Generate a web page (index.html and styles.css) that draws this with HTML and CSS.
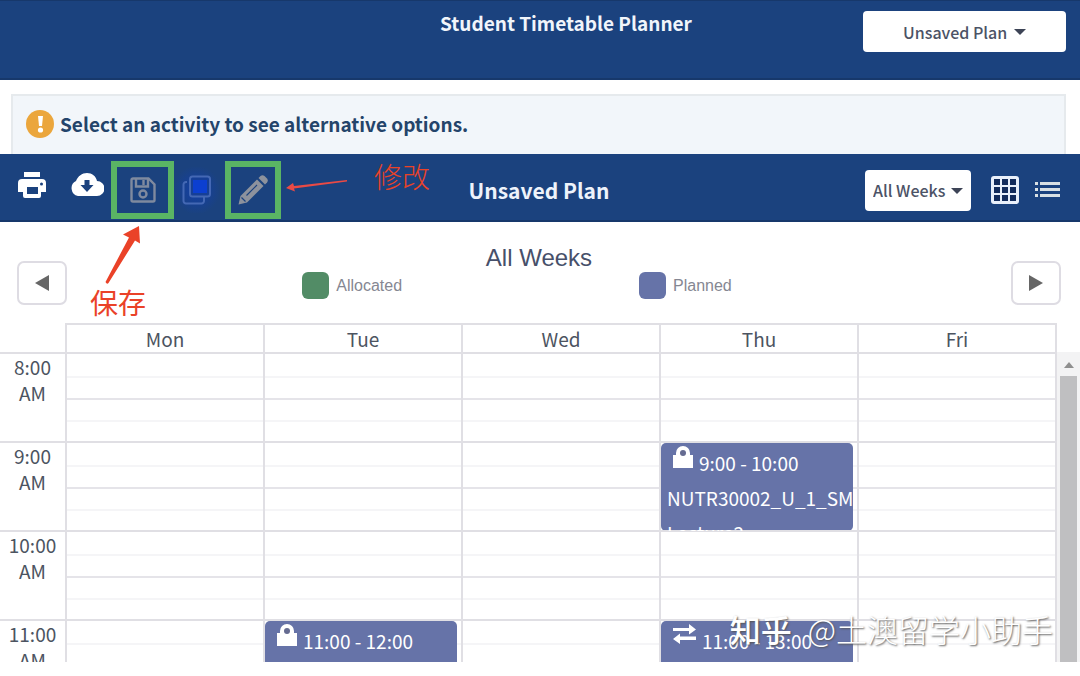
FILE: index.html
```html
<!DOCTYPE html>
<html lang="en">
<head>
<meta charset="utf-8">
<title>Student Timetable Planner</title>
<link rel="stylesheet" href="styles.css">
</head>
<body>

<header class="page-header">
  <h1>Student Timetable Planner</h1>
  <div class="dropdown dropdown-plan">
    <select aria-label="Plan">
      <option>Unsaved Plan</option>
    </select>
  </div>
</header>

<div class="notice">
  <svg width="28" height="28" viewBox="0 0 28 28" aria-hidden="true">
    <circle cx="14" cy="14" r="14" fill="#eba63c"/>
    <path d="M12 6h5l-1 10h-3z" fill="#fff"/>
    <circle cx="14.500" cy="20" r="2.600" fill="#fff"/>
  </svg>
  <p>Select an activity to see alternative options.</p>
</div>

<div class="toolbar">
  <div class="tools">
    <button class="tool tool-print" aria-label="Print">
      <svg width="28" height="26" viewBox="0 0 28 26">
        <path d="M6 0h16v5H6z" fill="#fff"/>
        <path d="M4 7h20a4 4 0 0 1 4 4v9h-5v4a2 2 0 0 1-2 2H7a2 2 0 0 1-2-2v-4H0v-9a4 4 0 0 1 4-4z" fill="#fff"/>
        <path d="M9 15h11v7H9z" fill="#1b427e"/>
        <circle cx="23.500" cy="12" r="1.500" fill="#1b427e"/>
      </svg>
    </button>
    <button class="tool tool-download" aria-label="Download">
      <svg width="34" height="24" viewBox="0 0 34 24">
        <path d="M8 23a8 8 0 0 1-2-15C8 3 12 0 17 0c5 0 9 3 10 8a7.500 7.500 0 0 1 0 15z" fill="#fff"/>
        <path d="M14.500 7h5v5h4L17 19l-6.500-7h4z" fill="#1b427e"/>
      </svg>
    </button>
    <button class="tool tool-save framed" aria-label="Save">
      <svg width="26" height="26" viewBox="0 0 26 26" fill="none" stroke="#7f8a9f" stroke-width="2.400">
        <path d="M3 1.500h15.500l6 6V23a1.500 1.500 0 0 1-1.500 1.500H3A1.500 1.500 0 0 1 1.500 23V3A1.500 1.500 0 0 1 3 1.500z"/>
        <path d="M6 2v7.500h12V2M13.500 3v5"/>
        <circle cx="13" cy="17" r="3.500"/>
      </svg>
    </button>
    <button class="tool tool-copy" aria-label="Copy">
      <svg width="30" height="30" viewBox="0 0 30 30" fill="none" stroke="#4468b4" stroke-width="2">
        <rect x="8" y="1.500" width="20" height="20" rx="2.500" fill="#163f96"/>
        <rect x="11" y="5" width="14" height="13" fill="#0c3fd0" stroke="none"/>
        <path d="M5 7H4a2.500 2.500 0 0 0-2.500 2.500V26A2.500 2.500 0 0 0 4 28.500h15.500A2.500 2.500 0 0 0 22 26v-4"/>
      </svg>
    </button>
    <button class="tool tool-edit framed" aria-label="Edit">
      <svg width="30" height="30" viewBox="0 0 30 30" fill="#8d929d">
        <path d="M20.500 3l2-2q2-1.500 4 0l2.500 2.500q1.500 2 0 4l-2 2z"/>
        <path d="M19 4.500l6.500 6.500L9 27.500l-8.500 2L2.500 21z"/>
        <path d="M8.500 20.500L19 10M3.500 22.500l4 4" stroke="#1b427e" stroke-width="1.200"/>
      </svg>
    </button>
  </div>
  <h2>Unsaved Plan</h2>
  <div class="views">
    <div class="dropdown dropdown-weeks">
      <select aria-label="Weeks">
        <option>All Weeks</option>
      </select>
    </div>
    <button class="tool" aria-label="Grid view">
      <svg width="28" height="28" viewBox="0 0 28 28">
        <rect width="28" height="28" rx="3" fill="#e9f0fb"/>
        <path d="M3 3h6v6H3zM11 3h6v6h-6zM19 3h6v6h-6zM3 11h6v6H3zM11 11h6v6h-6zM19 11h6v6h-6zM3 19h6v6H3zM11 19h6v6h-6zM19 19h6v6h-6z" fill="#132c5c"/>
      </svg>
    </button>
    <button class="tool" aria-label="List view">
      <svg width="26" height="16" viewBox="0 0 26 16">
        <path d="M1 0h3v3H1zM6 0h20v3H6zM1 6h3v3H1zM6 6h20v3H6zM1 12h3v3H1zM6 12h20v3H6z" fill="#d9e0e4"/>
      </svg>
    </button>
  </div>
</div>

<section class="week-nav">
  <button class="step" aria-label="Previous week">
    <svg width="14" height="16" viewBox="0 0 14 16"><path d="M14 0v16L0 8z" fill="#666"/></svg>
  </button>
  <div class="week-info">
    <h3>All Weeks</h3>
    <ul class="legend">
      <li><span class="swatch allocated"></span>Allocated</li>
      <li><span class="swatch planned"></span>Planned</li>
    </ul>
  </div>
  <button class="step" aria-label="Next week">
    <svg width="14" height="16" viewBox="0 0 14 16"><path d="M0 0v16l14-8z" fill="#666"/></svg>
  </button>
</section>

<main class="calendar">
  <table class="timetable">
    <thead>
      <tr>
        <td class="corner"></td>
        <th>Mon</th>
        <th>Tue</th>
        <th>Wed</th>
        <th>Thu</th>
        <th>Fri</th>
      </tr>
    </thead>
    <tbody>
      <tr>
        <th>8:00<br>AM</th>
        <td></td><td></td><td></td><td></td><td></td>
      </tr>
      <tr>
        <th>9:00<br>AM</th>
        <td></td><td></td><td></td>
        <td>
          <div class="event">
            <div class="event-time">
              <svg width="20" height="22" viewBox="0 0 20 22"><path d="M0 9h3V7a7 7 0 0 1 14 0v2h3v13H0z" fill="#fff"/><circle cx="10" cy="7" r="3" fill="#656b91"/></svg>
              <span>9:00 - 10:00</span>
            </div>
            NUTR30002_U_1_SM2<br>Lecture2
          </div>
        </td>
        <td></td>
      </tr>
      <tr>
        <th>10:00<br>AM</th>
        <td></td><td></td><td></td><td></td><td></td>
      </tr>
      <tr>
        <th>11:00<br>AM</th>
        <td></td>
        <td>
          <div class="event">
            <div class="event-time">
              <svg width="20" height="22" viewBox="0 0 20 22"><path d="M0 9h3V7a7 7 0 0 1 14 0v2h3v13H0z" fill="#fff"/><circle cx="10" cy="7" r="3" fill="#656b91"/></svg>
              <span>11:00 - 12:00</span>
            </div>
          </div>
        </td>
        <td></td>
        <td>
          <div class="event">
            <div class="event-time">
              <svg width="23" height="20" viewBox="0 0 23 20"><path d="M0 4h16V0l7 5.500-7 5V7H0zM23 12.500H7v-3L0 15l7 5v-4h16z" fill="#fff"/></svg>
              <span>11:00 - 13:00</span>
            </div>
          </div>
        </td>
        <td></td>
      </tr>
    </tbody>
  </table>
  <div class="scrollbar">
    <svg width="10" height="6" viewBox="0 0 10 6"><path d="M5 0l5 6H0z" fill="#8f8f8f"/></svg>
    <div class="thumb"></div>
  </div>
</main>

<!-- Hand-made notes on top of the planner -->
<svg class="note-arrow arrow-save" width="36" height="58" viewBox="0 0 36 58"><path d="M34 0L18 8.500l6 3L.5 56q1.500 3 3 1L30 14.500l5 3z" fill="#ea4228"/></svg>
<span class="note note-save" lang="zh">保存</span>
<svg class="note-arrow arrow-edit" width="62" height="12" viewBox="0 0 62 12"><path d="M0 8l7-5 1 3L61 0v1.500L8 8.500l1 3z" fill="#ea4a45"/></svg>
<span class="note note-edit" lang="zh">修改</span>
<div class="watermark" lang="zh"><b>知乎</b><span>@土澳留学小助手</span></div>

</body>
</html>
```

FILE: styles.css
```css
* {
  box-sizing: border-box;
}

body {
  position: relative;
  display: flex;
  flex-direction: column;
  height: 100vh;
  margin: 0;
  padding-bottom: 14px;
  overflow: hidden;
  font-family: "Noto Sans CJK SC", "Open Sans", sans-serif;
  font-size: 19px;
  color: #4c5461;
  background-color: #fff;
}

h1, h2, h3, p, ul {
  margin: 0;
  padding: 0;
}

button {
  padding: 0;
  border: none;
  background: none;
  cursor: pointer;
}

svg {
  display: block;
}

/* Top bar */
.page-header {
  display: grid;
  grid-template-columns: 1fr auto 1fr;
  align-items: start;
  flex: none;
  height: 80px;
  padding: 10px 14px 0 66px;
  background-color: #1b427e;
  border-top: 1px solid #17386b;
  border-bottom: 2px solid #17386b;
}

.page-header h1 {
  grid-column: 2;
  font-size: 19px;
  line-height: 24px;
  color: #f1f5fb;
}

.dropdown {
  position: relative;
}

.dropdown select {
  width: 100%;
  height: 41px;
  border: none;
  border-radius: 4px;
  appearance: none;
  background-color: #fff;
  font-family: inherit;
  font-size: 16px;
  font-weight: 500;
  color: #4c5366;
}

.dropdown::after {
  content: "";
  position: absolute;
  top: 18px;
  border: 6px solid transparent;
  border-top-color: #3d4456;
  border-bottom: none;
  pointer-events: none;
}

.dropdown-plan {
  justify-self: end;
  width: 203px;
}

.dropdown-plan select {
  padding: 0 40px;
}

.dropdown-plan::after {
  right: 40px;
}

.dropdown-weeks {
  width: 106px;
}

.dropdown-weeks select {
  padding: 0 8px;
}

.dropdown-weeks::after {
  right: 8px;
}

/* Notice */
.notice {
  display: flex;
  align-items: center;
  gap: 6px;
  flex: none;
  height: 60px;
  margin: 14px 14px 0 11px;
  padding: 0 0 2px 13px;
  border: 2px solid #e6eaed;
  border-bottom: none;
  background-color: #f2f6fa;
}

.notice p {
  line-height: 28px;
  font-weight: bold;
  color: #24446a;
}

/* Toolbar */
.toolbar {
  display: grid;
  grid-template-columns: 1fr auto 1fr;
  align-items: center;
  flex: none;
  height: 68px;
  padding: 6px 20px 0 18px;
  background-color: #1b427e;
  border-bottom: 2px solid #17386b;
}

.toolbar h2 {
  font-size: 21px;
  line-height: 28px;
  color: #eef3fb;
}

.tools {
  display: flex;
  align-items: center;
}

.tool {
  display: flex;
  justify-content: center;
  align-items: center;
}

.tool-print,
.tool-download {
  height: 58px;
  padding-bottom: 10px;
}

.tool-print {
  justify-content: flex-start;
  width: 44px;
}

.tool-download {
  width: 49px;
}

.framed {
  height: 58px;
  border: 6px solid #5ab464;
}

.tool-save {
  width: 63px;
}

.tool-copy {
  width: 45px;
  height: 46px;
  margin-right: 6px;
  background: radial-gradient(#133fa8, #1b427e 75%);
}

.tool-edit {
  width: 56px;
}

.views {
  display: flex;
  justify-content: flex-end;
  align-items: center;
  gap: 15px;
}

.dropdown-weeks {
  margin-right: 5px;
}

/* Week navigation */
.week-nav {
  display: flex;
  align-items: flex-end;
  flex: none;
  height: 101px;
  padding: 0 19px 18px 17px;
}

.step {
  display: flex;
  justify-content: center;
  align-items: center;
  width: 50px;
  height: 44px;
  border: 2px solid #dedce3;
  border-radius: 7px;
  background-color: #fff;
}

.week-info {
  flex: 1;
  font-family: "Liberation Sans", Arial, sans-serif;
  text-align: center;
}

.week-info h3 {
  font-size: 24px;
  line-height: 28px;
  font-weight: normal;
  color: #47506a;
}

.legend {
  display: flex;
  justify-content: center;
  gap: 237px;
  padding: 0 44px 6px 0;
  list-style: none;
  font-size: 16px;
  color: #858792;
}

.legend li {
  display: flex;
  align-items: center;
  gap: 7px;
}

.swatch {
  width: 27px;
  height: 27px;
  border-radius: 6px;
}

.allocated {
  background-color: #528c66;
}

.planned {
  background-color: #6673a8;
}

/* Calendar */
.calendar {
  display: flex;
  flex: 1;
  min-height: 0;
  overflow: hidden;
}

.timetable {
  flex: 1;
  width: 0;
  height: 386px;
  table-layout: fixed;
  border-collapse: collapse;
}

.timetable td,
.timetable th {
  padding: 0;
  border: 2px solid #e0dfe4;
  font-weight: normal;
}

.timetable thead tr {
  height: 29px;
}

.timetable thead th {
  line-height: 27px;
}

.timetable .corner {
  width: 66px;
  border-top: none;
  border-left: none;
}

.timetable tbody tr {
  height: 89px;
}

.timetable tbody th {
  border-left: none;
  line-height: 26px;
  vertical-align: top;
}

/* quarter hour lines, the half hour one is darker */
.timetable tbody td {
  vertical-align: top;
  background-image:
    linear-gradient(#f5f5f7, #f5f5f7),
    linear-gradient(#e5e4e9, #e5e4e9),
    linear-gradient(#f5f5f7, #f5f5f7);
  background-size: 100% 2px;
  background-position: 0 22px, 0 44px, 0 66px;
  background-repeat: no-repeat;
}

.event {
  height: 88px;
  margin: 0 4px -1px 0;
  padding: 2px 0 0 6px;
  border-radius: 5px;
  overflow: hidden;
  background-color: #6673a8;
  line-height: 35px;
  color: #fff;
  white-space: nowrap;
}

.event-time {
  display: flex;
  gap: 6px;
  padding-left: 6px;
}

.event-time svg {
  margin-top: 1px;
}

.scrollbar {
  display: flex;
  flex-direction: column;
  align-items: center;
  gap: 8px;
  width: 23px;
  margin-top: 29px;
  padding-top: 10px;
  background-color: #f3f3f4;
}

.thumb {
  flex: 1;
  width: 17px;
  background-color: #bfbfc1;
}

/* Notes */
.note,
.note-arrow,
.watermark {
  position: absolute;
}

.note {
  font-size: 28px;
  line-height: 32px;
  color: #ea4228;
}

.note-save {
  left: 90px;
  top: 286px;
}

.note-edit {
  left: 374px;
  top: 160px;
  font-weight: 300;
}

.arrow-save {
  left: 105px;
  top: 226px;
}

.arrow-edit {
  left: 286px;
  top: 180px;
}

.watermark {
  display: flex;
  gap: 16px;
  right: 27px;
  top: 611px;
  font-size: 31px;
  line-height: 36px;
  font-weight: 300;
  color: #fff;
  text-shadow: 1px 1px 2px #555;
  white-space: nowrap;
}

.watermark b {
  font-weight: 500;
}
```
